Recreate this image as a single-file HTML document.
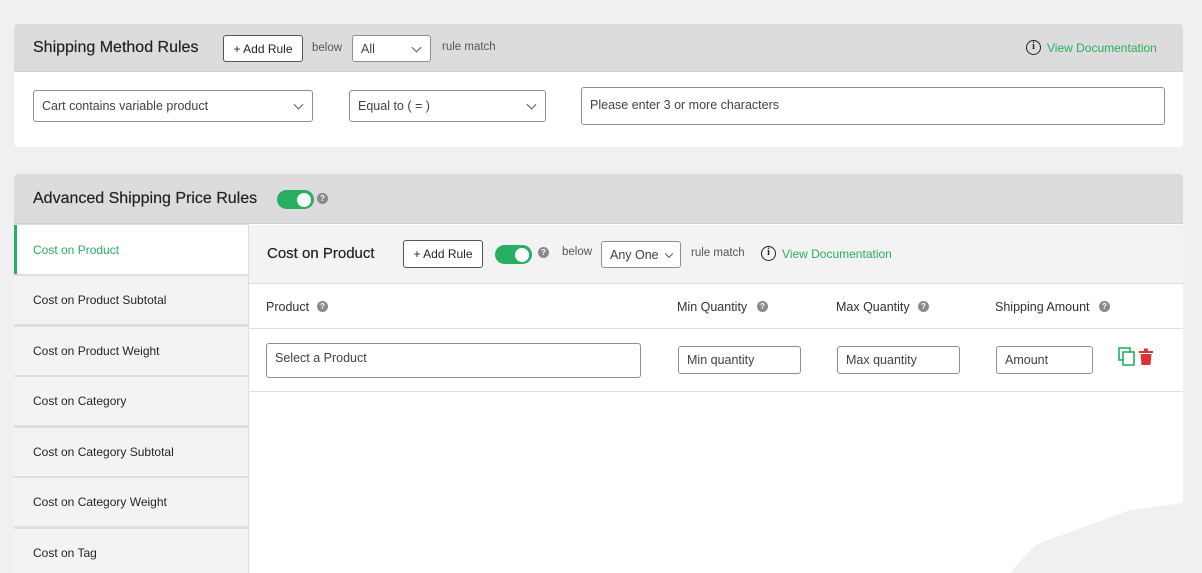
<!DOCTYPE html>
<html><head><meta charset="utf-8"><style>
*{box-sizing:border-box;margin:0;padding:0}
body{width:1202px;height:573px;background:#f0f0f0;font-family:"Liberation Sans",sans-serif;color:#2c3338;position:relative;overflow:hidden;font-size:13px}
.a{position:absolute}
.box{position:absolute;background:#fff;border:1px solid #8c8f94;border-radius:3px;font-size:12.5px;color:#3c434a;padding-left:8px;display:flex;align-items:center}
.chev{position:absolute;right:10px;top:50%;width:7px;height:7px;border-right:1.5px solid #50575e;border-bottom:1.5px solid #50575e;transform:translateY(-70%) rotate(45deg)}
.btn{position:absolute;background:#fff;border:1px solid #50575e;border-radius:3px;font-size:12px;color:#1d2327;display:flex;align-items:center;justify-content:center}
.sm{font-size:11.5px;color:#50575e}
.q{position:absolute;width:11px;height:11px;border-radius:50%;background:#8a8a8a;color:#fff;font-size:8px;font-weight:bold;text-align:center;line-height:11px}
.tog{position:absolute;width:37px;height:19px;border-radius:10px;background:#27ae60}
.tog::after{content:"";position:absolute;right:3px;top:2.5px;width:14px;height:14px;border-radius:50%;background:#fff}
.info{position:absolute;width:15px;height:15px;border:1.6px solid #1d2327;border-radius:50%;font-size:10px;font-weight:bold;text-align:center;line-height:12px;color:#1d2327;font-family:"Liberation Serif",serif}
.doc{position:absolute;color:#27ae60;font-size:12px}
.side{position:absolute;left:14px;width:234px;height:48px;background:#f3f3f3;font-size:12px;color:#1d2327;padding-left:19px;display:flex;align-items:center}
.th{position:absolute;top:300px;font-size:12.5px;color:#2c3338}
</style></head><body>
<div class="a" style="left:14px;top:24px;width:1169px;height:48px;background:#dcdcdc;border-radius:4px 4px 0 0;border-bottom:1px solid #d0d0d0"></div>
<div class="a" style="left:14px;top:72px;width:1169px;height:75px;background:#fff;border-radius:0 0 4px 4px"></div>
<div class="a" style="left:33px;top:39px;font-size:16px;color:#1d2327;-webkit-text-stroke:0.2px #1d2327">Shipping Method Rules</div>
<div class="btn" style="left:223px;top:35px;width:80px;height:27px">+ Add Rule</div>
<div class="a sm" style="left:312px;top:42px">below</div>
<div class="box" style="left:352px;top:35px;width:79px;height:27px">All<span class="chev"></span></div>
<div class="a sm" style="left:442px;top:41px">rule match</div>
<div class="info" style="left:1026px;top:40px">i</div>
<div class="doc" style="left:1047px;top:41px">View Documentation</div>
<div class="box" style="left:33px;top:90px;width:280px;height:32px">Cart contains variable product<span class="chev"></span></div>
<div class="box" style="left:349px;top:90px;width:197px;height:32px">Equal to ( = )<span class="chev"></span></div>
<div class="box" style="left:581px;top:87px;width:584px;height:38px;align-items:flex-start;padding-top:10px">Please enter 3 or more characters</div>

<div class="a" style="left:14px;top:174px;width:1169px;height:50px;background:#dcdcdc;border-radius:4px 4px 0 0;border-bottom:1px solid #d0d0d0"></div>
<div class="a" style="left:33px;top:190px;font-size:16px;color:#1d2327;-webkit-text-stroke:0.2px #1d2327">Advanced Shipping Price Rules</div>
<div class="tog" style="left:277px;top:190px"></div>
<div class="q" style="left:317px;top:193px">?</div>
<div class="a" style="left:14px;top:224px;width:234px;height:349px;background:#dedede"></div>
<div class="side" style="top:225px;height:49px;background:#fff;color:#27ae60;border-left:3px solid #27ae60;padding-left:16px">Cost on Product</div>
<div class="side" style="top:276px">Cost on Product Subtotal</div>
<div class="side" style="top:327px">Cost on Product Weight</div>
<div class="side" style="top:377px">Cost on Category</div>
<div class="side" style="top:428px">Cost on Category Subtotal</div>
<div class="side" style="top:478px">Cost on Category Weight</div>
<div class="side" style="top:529px;height:44px;padding-top:4px">Cost on Tag</div>

<div class="a" style="left:248px;top:224px;width:935px;height:349px;background:#fff;border-left:1px solid #ddd"></div>
<div class="a" style="left:249px;top:225px;width:934px;height:59px;background:#f3f3f3;border-bottom:1px solid #ddd"></div>
<div class="a" style="left:267px;top:245px;font-size:15px;color:#1d2327;-webkit-text-stroke:0.2px #1d2327">Cost on Product</div>
<div class="btn" style="left:403px;top:240px;width:80px;height:28px">+ Add Rule</div>
<div class="tog" style="left:495px;top:245px"></div>
<div class="q" style="left:538px;top:247px">?</div>
<div class="a sm" style="left:562px;top:246px">below</div>
<div class="box" style="left:601px;top:241px;width:80px;height:27px">Any One<span class="chev" style="right:8px;width:6px;height:6px"></span></div>
<div class="a sm" style="left:691px;top:247px">rule match</div>
<div class="info" style="left:761px;top:246px">i</div>
<div class="doc" style="left:782px;top:247px">View Documentation</div>

<div class="th" style="left:266px">Product</div><div class="q" style="left:317px;top:301px">?</div>
<div class="th" style="left:677px">Min Quantity</div><div class="q" style="left:757px;top:301px">?</div>
<div class="th" style="left:836px">Max Quantity</div><div class="q" style="left:918px;top:301px">?</div>
<div class="th" style="left:995px">Shipping Amount</div><div class="q" style="left:1099px;top:301px">?</div>
<div class="a" style="left:249px;top:328px;width:934px;height:1px;background:#ddd"></div>
<div class="box" style="left:266px;top:343px;width:375px;height:35px;align-items:flex-start;padding-top:7px">Select a Product</div>
<div class="box" style="left:678px;top:346px;width:123px;height:28px">Min quantity</div>
<div class="box" style="left:837px;top:346px;width:123px;height:28px">Max quantity</div>
<div class="box" style="left:996px;top:346px;width:97px;height:28px">Amount</div>
<svg class="a" style="left:1117px;top:346px" width="42" height="24">
<rect x="2" y="2" width="11" height="12" fill="none" stroke="#27ae60" stroke-width="1.6"/>
<rect x="6" y="6" width="11" height="13" fill="#fff" stroke="#27ae60" stroke-width="1.6"/>
<rect x="22" y="5" width="14" height="2" fill="#d63638"/><rect x="27" y="2.5" width="4" height="3" fill="#d63638"/>
<path d="M23.5 8h11l-1 11h-9z" fill="#d63638"/>
</svg>
<div class="a" style="left:249px;top:391px;width:934px;height:1px;background:#ddd"></div>
<svg class="a" style="left:0;top:0" width="1202" height="573"><polygon points="1010,573 1035,545 1130,510 1183,503 1202,503 1202,573" fill="#f0f0f0"/></svg>
</body></html>
